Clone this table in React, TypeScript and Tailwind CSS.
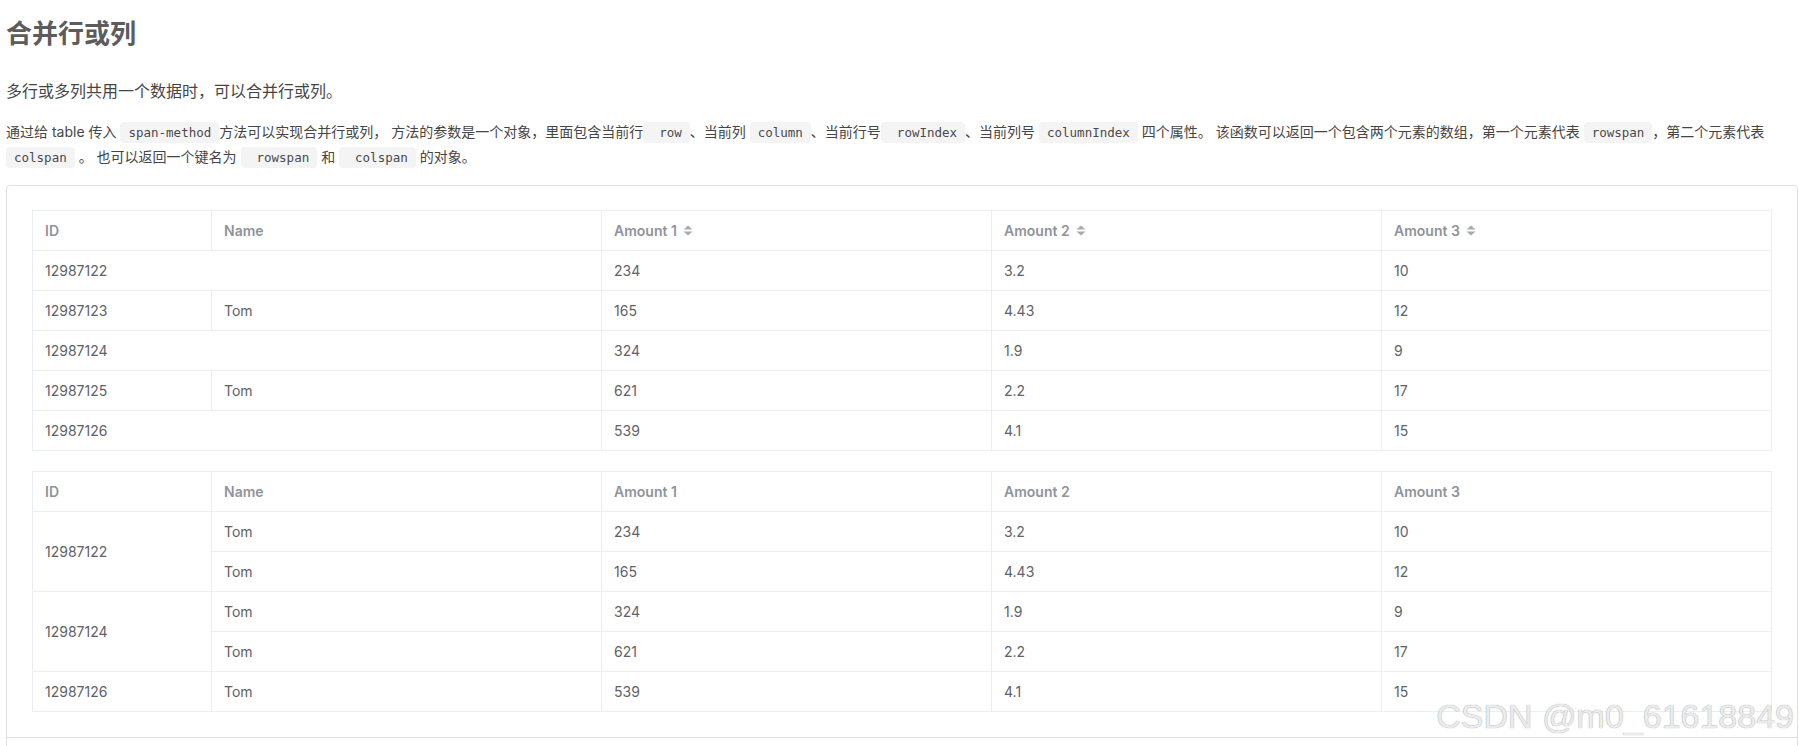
import React from "react";

const data = [
  { id: "12987122", name: "Tom", a1: "234", a2: "3.2", a3: "10" },
  { id: "12987123", name: "Tom", a1: "165", a2: "4.43", a3: "12" },
  { id: "12987124", name: "Tom", a1: "324", a2: "1.9", a3: "9" },
  { id: "12987125", name: "Tom", a1: "621", a2: "2.2", a3: "17" },
  { id: "12987126", name: "Tom", a1: "539", a2: "4.1", a3: "15" },
];

const th = "h-10 border border-[#ebeef5] px-3 text-left align-middle text-[14px] font-semibold text-[#909399]";
const td = "h-10 border border-[#ebeef5] px-3 text-left align-middle text-[14px] text-[#606266]";

const SortIcon = () => (
  <svg width="10" height="11" viewBox="0 0 10 11" className="ml-[6px] shrink-0">
    <path d="M5 0.5L9.5 4.6H0.5Z" fill="#a8abb2" />
    <path d="M0.5 6.4H9.5L5 10.5Z" fill="#a8abb2" />
  </svg>
);

const Code = ({ children, lead }: { children: React.ReactNode; lead?: boolean }) => (
  <code
    className={
      lead
        ? "rounded-[4px] bg-[#f4f4f5] py-[3px] pl-[16px] pr-[8px] font-['DejaVu_Sans_Mono',monospace] text-[12.5px] text-[#4a4a4a]"
        : "rounded-[4px] bg-[#f4f4f5] px-[8px] py-[3px] font-['DejaVu_Sans_Mono',monospace] text-[12.5px] text-[#4a4a4a]"
    }
  >
    {children}
  </code>
);

const Head = ({ sortable }: { sortable?: boolean }) => (
  <thead>
    <tr>
      <th className={th}>ID</th>
      <th className={th}>Name</th>
      {["Amount 1", "Amount 2", "Amount 3"].map((h) => (
        <th key={h} className={th}>
          <span className="inline-flex items-center">
            {h}
            {sortable && <SortIcon />}
          </span>
        </th>
      ))}
    </tr>
  </thead>
);

const Cols = () => (
  <colgroup>
    <col className="w-[179px]" />
    <col />
    <col />
    <col />
    <col />
  </colgroup>
);

export default function App() {
  return (
    <div className="relative h-[746px] overflow-hidden bg-white pl-[6px] pr-[1px] font-['Inter','Noto_Sans_CJK_SC',sans-serif]">
      <h2 className="mt-[17px] text-[26px] font-bold leading-[34px] text-[#5c5c5c]">合并行或列</h2>
      <p className="mt-[28px] text-[16px] leading-[24px] text-[#454545]">
        多行或多列共用一个数据时，可以合并行或列。
      </p>
      <p className="mt-[17px] whitespace-nowrap text-[14px] leading-[24px] text-[#454545]">
        通过给 table 传入 <Code>span-method</Code>方法可以实现合并行或列， 方法的参数是一个对象，里面包含当前行<Code lead>row</Code>、当前列 <Code>column</Code>、当前行号<Code lead>rowIndex</Code>、当前列号 <Code>columnIndex</Code> 四个属性。 该函数可以返回一个包含两个元素的数组，第一个元素代表 <Code>rowspan</Code>，第二个元素代表
        <br />
        <Code>colspan</Code> 。 也可以返回一个键名为 <Code lead>rowspan</Code> 和 <Code lead>colspan</Code> 的对象。
      </p>

      <div className="mt-[15px] rounded-t-[4px] border border-[#dcdfe6]">
        <div className="px-[25px] pb-[25px] pt-6">
          <table className="w-full table-fixed border-collapse">
            <Cols />
            <Head sortable />
            <tbody>
              {data.map((r, i) => (
                <tr key={r.id}>
                  {i % 2 === 0 ? (
                    <td className={td} colSpan={2}>
                      {r.id}
                    </td>
                  ) : (
                    <>
                      <td className={td}>{r.id}</td>
                      <td className={td}>{r.name}</td>
                    </>
                  )}
                  <td className={td}>{r.a1}</td>
                  <td className={td}>{r.a2}</td>
                  <td className={td}>{r.a3}</td>
                </tr>
              ))}
            </tbody>
          </table>

          <table className="mt-5 w-full table-fixed border-collapse">
            <Cols />
            <Head />
            <tbody>
              {data.map((r, i) => (
                <tr key={r.id}>
                  {i % 2 === 0 && (
                    <td className={td} rowSpan={i === 4 ? 1 : 2}>
                      {r.id}
                    </td>
                  )}
                  <td className={td}>{r.name}</td>
                  <td className={td}>{r.a1}</td>
                  <td className={td}>{r.a2}</td>
                  <td className={td}>{r.a3}</td>
                </tr>
              ))}
            </tbody>
          </table>
        </div>
        <div className="h-[40px] border-t border-[#dcdfe6]" />
      </div>

      <div className="absolute right-[5px] top-[699px] font-['Liberation_Sans',sans-serif] text-[34px] leading-[34px] text-[#ebebeb] [text-shadow:0_0_1px_#8a8a8a]">
        CSDN @m0_61618849
      </div>
    </div>
  );
}
